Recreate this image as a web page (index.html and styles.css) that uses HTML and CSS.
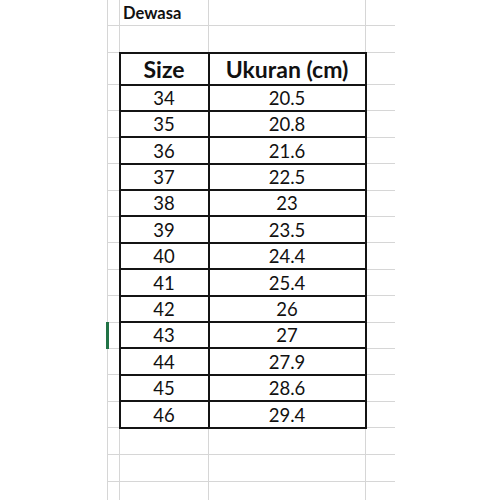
FILE: index.html
```html
<!DOCTYPE html>
<html lang="id">
<head>
<meta charset="utf-8">
<title>Dewasa</title>
<link rel="stylesheet" href="styles.css">
</head>
<body>
<table class="sheet">
  <colgroup>
    <col class="c0"><col class="c1"><col class="c2"><col class="c3">
  </colgroup>
  <tbody>
    <tr class="r1"><td></td><td class="label">Dewasa</td><td></td><td></td></tr>
    <tr class="r2"><td></td><td></td><td></td><td></td></tr>
    <tr class="rh"><td></td><td class="t head">Size</td><td class="t head">Ukuran (cm)</td><td></td></tr>
    <tr class="rd"><td></td><td class="t">34</td><td class="t">20.5</td><td></td></tr>
    <tr class="rd"><td></td><td class="t">35</td><td class="t">20.8</td><td></td></tr>
    <tr class="rd"><td></td><td class="t">36</td><td class="t">21.6</td><td></td></tr>
    <tr class="rd"><td></td><td class="t">37</td><td class="t">22.5</td><td></td></tr>
    <tr class="rd"><td></td><td class="t">38</td><td class="t">23</td><td></td></tr>
    <tr class="rd"><td></td><td class="t">39</td><td class="t">23.5</td><td></td></tr>
    <tr class="rd"><td></td><td class="t">40</td><td class="t">24.4</td><td></td></tr>
    <tr class="rd"><td></td><td class="t">41</td><td class="t">25.4</td><td></td></tr>
    <tr class="rd"><td></td><td class="t">42</td><td class="t">26</td><td></td></tr>
    <tr class="rd"><td class="sel"></td><td class="t">43</td><td class="t">27</td><td></td></tr>
    <tr class="rd"><td></td><td class="t">44</td><td class="t">27.9</td><td></td></tr>
    <tr class="rd"><td></td><td class="t">45</td><td class="t">28.6</td><td></td></tr>
    <tr class="rd"><td></td><td class="t">46</td><td class="t">29.4</td><td></td></tr>
    <tr class="re"><td></td><td></td><td></td><td></td></tr>
    <tr class="re"><td></td><td></td><td></td><td></td></tr>
    <tr class="re"><td></td><td></td><td></td><td></td></tr>
  </tbody>
</table>
</body>
</html>
```

FILE: styles.css
```css
html, body {
  margin: 0;
  padding: 0;
  background: #ffffff;
  height: 500px;
  overflow: hidden;
}

.sheet {
  margin-left: 106px;
  margin-top: -1px;
  border-collapse: collapse;
  table-layout: fixed;
  width: 287px;
  font-family: Lato, "Liberation Sans", sans-serif;
  color: #111111;
}

.c0 { width: 12px; }
.c1 { width: 89px; }
.c2 { width: 157px; }
.c3 { width: 29px; }

.sheet td {
  border: 1px solid #d6d6d6;
  padding: 0;
  text-align: center;
  vertical-align: bottom;
  white-space: nowrap;
  overflow: visible;
}

.sheet td:last-child {
  border-right: none;
}

.r1 { height: 26px; }
.r2 { height: 27px; }
.rh { height: 32px; }
.rd { height: 26.4px; }
.re { height: 27px; }

.sheet td.t {
  border: 2px solid #141414;
  font-size: 18.5px;
  line-height: 20px;
  padding-bottom: 2px;
}

.sheet td.head {
  font-size: 23px;
  font-weight: 700;
  line-height: 24px;
  padding-bottom: 3px;
}

.sheet td.label {
  text-align: left;
  font-size: 16.5px;
  font-weight: 700;
  padding-left: 3px;
  padding-bottom: 3px;
  line-height: 18px;
}

.sheet td.sel {
  border-left: 3px solid #217346;
}
```
